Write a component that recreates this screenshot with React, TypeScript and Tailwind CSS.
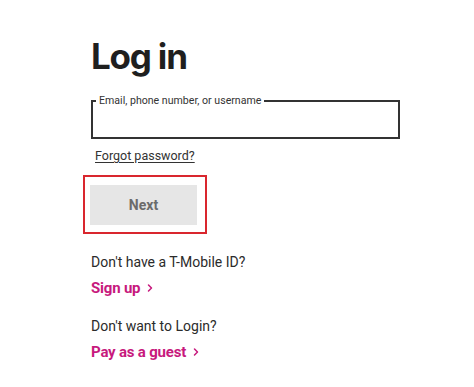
import { ChevronRight } from 'lucide-react';

const font = { fontFamily: 'Roboto, "Noto Sans", sans-serif' };

function TextLink({ label }: { label: string }) {
  return (
    <a href="#" className="flex h-[18px] items-center gap-[4px] text-[15px] font-bold tracking-[-0.2px] text-[#c7197d]">
      {label}
      <ChevronRight className="h-[12px] w-[12px]" strokeWidth={3} />
    </a>
  );
}

export default function App() {
  return (
    <div className="min-h-screen w-[474px] bg-white text-[#2b2b2b]" style={font}>
      <div className="flex flex-col pl-[91px] pt-[38px]">
        <h1 className="text-[35px] font-bold leading-[36px] tracking-[-1.2px] text-[#1f1f1f]" style={{ fontFamily: 'Inter, Roboto, sans-serif' }}>
          Log in
        </h1>

        <div className="relative mt-[26px] h-[39px] w-[309px] border-2 border-[#333]">
          <span className="absolute -top-[8px] left-[3px] bg-white px-[3px] text-[10.6px] leading-[13px] text-[#333]">
            Email, phone number, or username
          </span>
        </div>

        <a href="#" className="mt-[9px] ml-[4px] self-start text-[12.5px] leading-[16px] text-[#333] underline underline-offset-2">
          Forgot password?
        </a>

        <div className="mt-[11px] -ml-[8px] h-[59px] w-[124px] border-2 border-[#d9262e] pl-[5px] pt-[8px]">
          <button className="h-[40px] w-[107px] bg-[#e6e6e6] text-[14px] font-bold text-[#6b6b6b]">Next</button>
        </div>

        <p className="mt-[19px] text-[14px] leading-[18px] text-[#2b2b2b]">Don't have a T-Mobile ID?</p>
        <div className="mt-[8px]">
          <TextLink label="Sign up" />
        </div>

        <p className="mt-[20px] text-[14px] leading-[18px] text-[#2b2b2b]">Don't want to Login?</p>
        <div className="mt-[8px]">
          <TextLink label="Pay as a guest" />
        </div>
      </div>
    </div>
  );
}
